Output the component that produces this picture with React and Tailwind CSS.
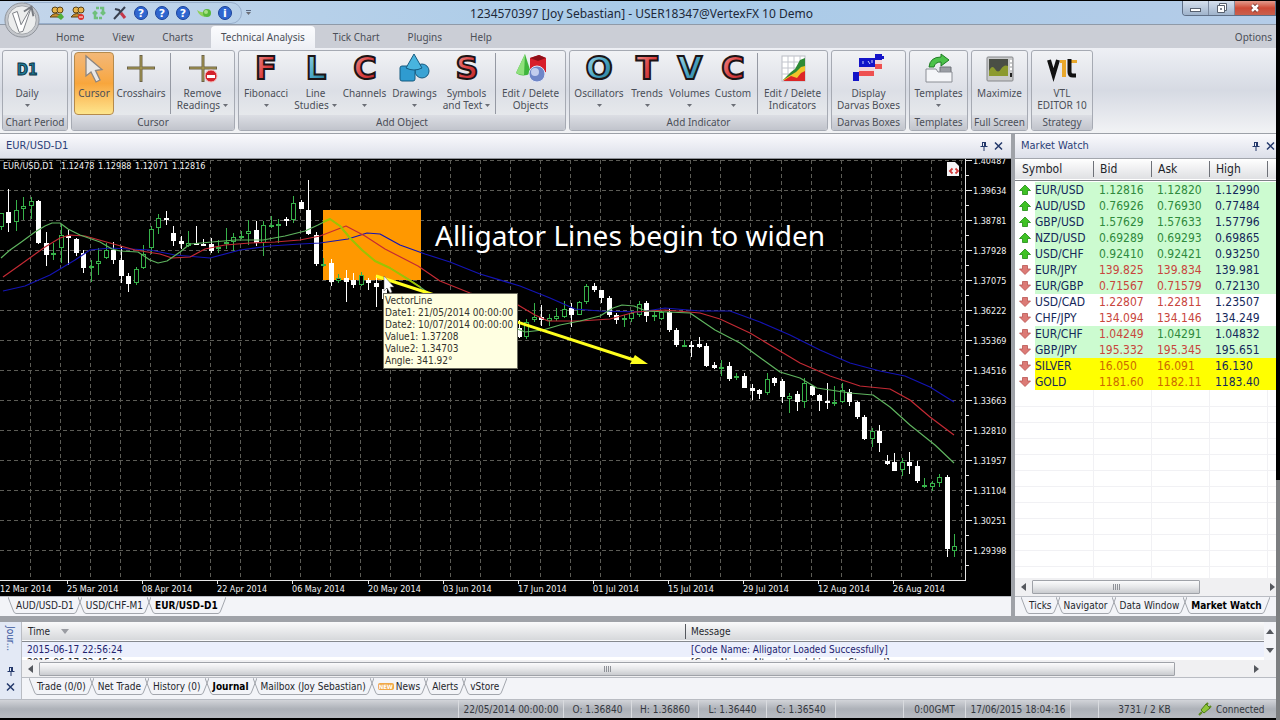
import { useState } from 'react';
import clsx from 'clsx';

// [kind, high, bodyTop, bodyBottom, low]; 'g' is an up bar, 'w' a down bar
const CANDLES = [
  ['g', 213, 213, 227, 230], ['w', 189, 212, 223, 232], ['g', 200, 210, 222, 231], ['g', 197, 206, 209, 220],
  ['g', 197, 201, 206, 219], ['w', 200, 201, 243, 244], ['w', 232, 243, 255, 266], ['g', 243, 253, 255, 260],
  ['g', 224, 235, 248, 263], ['w', 230, 236, 238, 265], ['w', 238, 239, 253, 256], ['w', 250, 253, 268, 273],
  ['g', 260, 266, 268, 282], ['g', 248, 261, 264, 275], ['g', 243, 250, 258, 259], ['w', 242, 250, 260, 264],
  ['w', 246, 260, 276, 283], ['w', 273, 276, 284, 292], ['g', 267, 269, 283, 285], ['g', 245, 254, 268, 269],
  ['g', 226, 229, 248, 254], ['g', 214, 218, 228, 234], ['w', 211, 218, 220, 225], ['w', 226, 233, 241, 246],
  ['w', 236, 241, 244, 249], ['g', 231, 243, 246, 247], ['w', 226, 243, 245, 245], ['w', 239, 244, 246, 246],
  ['w', 238, 244, 251, 253], ['g', 240, 247, 249, 253], ['g', 228, 242, 243, 249], ['g', 233, 237, 242, 251],
  ['g', 231, 236, 238, 239], ['g', 220, 231, 234, 245], ['w', 221, 230, 243, 246], ['g', 221, 225, 243, 256],
  ['g', 216, 225, 227, 228], ['g', 219, 224, 225, 243], ['w', 217, 219, 221, 226], ['g', 196, 203, 220, 223],
  ['w', 200, 202, 209, 209], ['w', 180, 210, 234, 235], ['w', 232, 235, 264, 266], ['g', 258, 264, 266, 267],
  ['w', 259, 263, 282, 286], ['g', 274, 278, 281, 283], ['w', 270, 278, 282, 302], ['w', 273, 280, 285, 288],
  ['g', 272, 275, 285, 286], ['w', 278, 280, 283, 290], ['w', 275, 283, 287, 307], ['w', 287, 289, 299, 306],
  null, null, null, null, null, null, null, null, null, null, null, null, null, null, null, null, null,
  ['w', 320, 328, 337, 338], ['g', 319, 322, 337, 339], ['g', 303, 317, 320, 322], ['w', 305, 317, 320, 326],
  ['g', 314, 318, 321, 326], ['g', 308, 316, 319, 321], ['g', 301, 309, 317, 318], ['w', 303, 308, 315, 327],
  ['g', 301, 302, 315, 315], ['g', 284, 286, 302, 304], ['w', 283, 286, 290, 292], ['w', 290, 290, 298, 303],
  ['w', 296, 298, 315, 317], ['w', 313, 315, 320, 324], ['g', 315, 318, 320, 327], ['g', 310, 313, 319, 322],
  ['g', 301, 304, 315, 317], ['w', 301, 303, 316, 322], ['g', 311, 315, 317, 321], ['g', 311, 312, 319, 320],
  ['w', 308, 312, 330, 332], ['w', 328, 330, 345, 347], ['g', 340, 345, 346, 347], ['w', 341, 345, 347, 357],
  ['w', 337, 344, 347, 348], ['w', 343, 346, 366, 367], ['w', 362, 365, 368, 369], ['g', 360, 367, 368, 376],
  ['w', 362, 366, 379, 381], ['g', 373, 376, 378, 380], ['w', 373, 376, 388, 388], ['w', 384, 388, 391, 400],
  ['w', 389, 390, 394, 399], ['g', 373, 379, 393, 395], ['w', 377, 378, 383, 386], ['w', 379, 381, 397, 403],
  ['g', 393, 396, 399, 413], ['w', 391, 394, 402, 411], ['g', 378, 383, 402, 408], ['w', 385, 386, 395, 396],
  ['w', 394, 395, 401, 411], ['w', 383, 401, 403, 409], ['g', 386, 402, 403, 406], ['g', 383, 390, 402, 403],
  ['w', 389, 392, 402, 406], ['w', 401, 402, 417, 419], ['w', 415, 417, 439, 440], ['g', 428, 431, 439, 447],
  ['w', 425, 431, 443, 452], ['w', 455, 461, 464, 465], ['w', 453, 462, 471, 471], ['g', 458, 462, 470, 476],
  ['w', 452, 462, 466, 474], ['w', 461, 466, 481, 483], ['g', 478, 485, 486, 488], ['g', 481, 483, 487, 491],
  ['g', 474, 477, 483, 487], ['w', 475, 477, 549, 557], ['g', 534, 546, 551, 557],
];

const LIPS = '1,258 10,250 20,243 35,232 45,226 52,223 60,223 68,229 80,235 100,242 112,249 120,251 138,252 150,260 158,263 167,261 180,252 190,244 212,242 235,240 263,240 285,236 305,231 318,225 330,219 340,226 350,238 362,250 375,261 390,268 410,280 430,294 460,306 500,322 525,332 543,330 560,325 580,321 600,316 613,308 622,305 634,306 646,311 690,313 715,330 740,343 780,372 800,378 817,388 850,393 873,395 890,407 910,425 935,445 954,463';
const TEETH = '3,277 20,265 45,247 60,238 70,235 85,236 110,243 135,250 160,254 172,258 190,257 205,249 225,245 250,243 275,242 300,240 320,236 346,226 365,236 385,249 418,266 440,281 470,293 518,305 535,315 548,321 580,321 610,319 635,312 665,310 700,313 720,319 750,333 780,351 800,363 830,376 860,386 890,389 910,400 930,417 954,435';
const JAW = '3,291 25,286 50,275 75,260 90,250 110,248 150,250 175,255 210,258 240,250 270,246 300,244 320,243 348,239 367,233 380,234 400,245 425,254 450,262 480,274 520,286 550,298 575,309 600,311 640,312 665,308 700,311 730,311 760,322 790,335 820,350 850,363 880,371 905,376 930,387 954,402';

const PRICES = ['1.40487', '1.39634', '1.38781', '1.37928', '1.37075', '1.36222', '1.35369', '1.34516', '1.33663', '1.32810', '1.31957', '1.31104', '1.30251', '1.29398'];
const DATES = ['12 Mar 2014', '25 Mar 2014', '08 Apr 2014', '22 Apr 2014', '06 May 2014', '20 May 2014', '03 Jun 2014', '17 Jun 2014', '01 Jul 2014', '15 Jul 2014', '29 Jul 2014', '12 Aug 2014', '26 Aug 2014'];
const LAST_BAR = [['EUR/USD,D1', 3], ['1.12478', 61], ['1.12988', 98], ['1.12071', 135], ['1.12816', 172]];

const QUOTES = [
  ['up', 'EUR/USD', '1.12816', '1.12820', '1.12990', 'gg', 'green'],
  ['up', 'AUD/USD', '0.76926', '0.76930', '0.77484', 'gg', 'green'],
  ['up', 'GBP/USD', '1.57629', '1.57633', '1.57796', 'gg', 'green'],
  ['up', 'NZD/USD', '0.69289', '0.69293', '0.69865', 'gg', 'green'],
  ['up', 'USD/CHF', '0.92410', '0.92421', '0.93250', 'gg', 'green'],
  ['down', 'EUR/JPY', '139.825', '139.834', '139.981', 'rr', 'green'],
  ['down', 'EUR/GBP', '0.71567', '0.71579', '0.72130', 'rr', 'green'],
  ['down', 'USD/CAD', '1.22807', '1.22811', '1.23507', 'rr', 'white'],
  ['down', 'CHF/JPY', '134.094', '134.146', '134.249', 'rr', 'white'],
  ['down', 'EUR/CHF', '1.04249', '1.04291', '1.04832', 'rg', 'green'],
  ['down', 'GBP/JPY', '195.332', '195.345', '195.651', 'rr', 'green'],
  ['down', 'SILVER', '16.050', '16.091', '16.130', 'oo', 'yellow'],
  ['down', 'GOLD', '1181.60', '1182.11', '1183.40', 'oo', 'yellow'],
];

const ROW_BG = { green: 'bg-[#ccfbd0]', white: 'bg-white', yellow: 'bg-[#ffff00]' };
const PRICE_COLOR = { g: 'text-[#2f8a3c]', r: 'text-[#c8463c]', o: 'text-[#cc6a00]' };

function LetterIcon({ letter, tone }) {
  return (
    <svg viewBox="0 0 32 32" className="h-8 w-8 overflow-visible">
      <defs>
        <linearGradient id={`fill-${tone}`} x1="0" y1="0" x2="1" y2="1">
          <stop offset="0" stopColor={tone === 'red' ? '#f4a09a' : '#b9e4f0'} />
          <stop offset="0.5" stopColor={tone === 'red' ? '#dc4444' : '#4aa6c4'} />
          <stop offset="1" stopColor={tone === 'red' ? '#b01e24' : '#1c6c8c'} />
        </linearGradient>
      </defs>
      <text x="16" y="26" textAnchor="middle" fontFamily="DejaVu Sans, sans-serif" fontWeight="700" fontSize="32"
        fill={`url(#fill-${tone})`} stroke="#1c1416" strokeWidth="2">{letter}</text>
    </svg>
  );
}

function PeriodIcon() {
  return (
    <svg viewBox="0 0 32 32" className="h-8 w-8">
      <text x="16" y="22" textAnchor="middle" fontFamily="DejaVu Sans Condensed, DejaVu Sans, sans-serif" fontWeight="700" fontSize="15" fill="#1f7f9c" stroke="#0c3242" strokeWidth="1">D1</text>
    </svg>
  );
}

function CursorIcon() {
  return (
    <svg viewBox="0 0 32 32" className="h-8 w-8">
      <path d="M8 3 L8 23 L13 19 L18 29 L22 27 L17.500 17.500 L24 16.500 Z" fill="#e9e7e6" stroke="#8c8580" strokeWidth="1.300" />
    </svg>
  );
}

function CrossIcon({ remove }) {
  return (
    <svg viewBox="0 0 32 32" className="h-8 w-8">
      <path d="M16 2 V29 M2 15 H30" stroke="#6b6248" strokeWidth="3" />
      <path d="M16 3 V28 M3 15 H29" stroke="#b3a24e" strokeWidth="1" />
      {remove && (
        <>
          <circle cx="24" cy="23" r="6" fill="#d4222c" stroke="#f2b4b0" />
          <rect x="20" y="22" width="8" height="3" fill="#fff" />
        </>
      )}
    </svg>
  );
}

function DrawingsIcon() {
  return (
    <svg viewBox="0 0 32 32" className="h-8 w-8" stroke="#155a80">
      <circle cx="23" cy="18" r="7" fill="#3aa3d4" />
      <rect x="1" y="13" width="15" height="15" rx="2" fill="#2f9bd0" />
      <path d="M15 1 L23 15 Q15 19 7 15 Z" fill="#48b4de" />
    </svg>
  );
}

function ObjectsIcon() {
  return (
    <svg viewBox="0 0 32 32" className="h-8 w-8">
      <path d="M15 5 L24 2 L31 5 V19 L22 21 L15 17 Z" fill="#d81e2a" />
      <path d="M15 5 L24 2 L31 5 L23 8 Z" fill="#8e0f18" />
      <path d="M10 1 L16 20 Q8 25 1 20 Z" fill="#3fb53c" />
      <path d="M10 1 L9 22 Q4 22 1 20 Z" fill="#8fe07c" />
      <circle cx="22" cy="21" r="8" fill="#6f86c8" stroke="#dfe5f6" />
      <circle cx="20" cy="19" r="4" fill="#c2cdee" />
    </svg>
  );
}

function IndicatorsIcon() {
  return (
    <svg viewBox="0 0 32 32" className="h-8 w-8">
      <rect x="5" y="3" width="23" height="25" fill="#fff" stroke="#b9bcc4" />
      <path d="M11 3 V28 M17 3 V28 M23 3 V28 M5 9 H28 M5 15 H28 M5 21 H28" stroke="#c3c6ce" />
      <path d="M6 27 L14 19 L18 16 L23 7 L28 5 V28 Z" fill="#2e8b35" />
      <path d="M6 27 L14 22 L19 19 L24 14 L28 13 V28 Z" fill="#f0c52a" />
      <path d="M6 28 L14 23 L20 25 L24 20 L28 18 V28 Z" fill="#dc2626" />
    </svg>
  );
}

function DarvasIcon() {
  return (
    <svg viewBox="0 0 32 32" className="h-8 w-8">
      <path d="M22 1 H29 V3 H31 V6 H29 V7 H22 Z M6 5 H22 V14 H6 Z M0 19 H6 V28 H0 Z" fill="#1414c8" />
      <path d="M22 7 H29 V16 H22 Z M6 14 H21 V23 H6 Z" fill="#f4d8dc" />
      <path d="M22 11 H29 V16 H22 Z M6 18 H21 V23 H6 Z" fill="#ee5050" />
      <path d="M10 8 V11 M15 8 L17 11 M19 7 V10" stroke="#cdd2ff" />
    </svg>
  );
}

function TemplatesIcon() {
  return (
    <svg viewBox="0 0 32 32" className="h-8 w-8">
      <path d="M17 14 H28 V20 H17 Z" fill="#9a9da4" stroke="#6f7278" />
      <path d="M3 16 H13 L15 19 H29 V29 H3 Z" fill="#f4f5f8" stroke="#8a8d94" />
      <path d="M6 14 Q7 4 18 4 V1 L26 7 L18 13 V9 Q12 9 11 14 Z" fill="#4cc24a" stroke="#1d7a22" />
    </svg>
  );
}

function MaximizeIcon() {
  return (
    <svg viewBox="0 0 32 32" className="h-8 w-8">
      <rect x="3" y="4" width="26" height="24" rx="1" fill="#c9cacb" stroke="#85878a" />
      <rect x="5" y="6" width="19" height="17" fill="#4a4e45" />
      <path d="M5 18 Q8 11 11 16 T17 16 T24 13 V23 H5 Z" fill="#8c9a2e" />
      <path d="M27 7 V9 M27 11 V13 M27 15 V17" stroke="#fff" strokeWidth="2" />
      <path d="M27 20 V24" stroke="#222" strokeWidth="2" />
    </svg>
  );
}

function VtlIcon() {
  return (
    <svg viewBox="0 0 32 32" className="h-8 w-8" fill="none">
      <path d="M3 7 L7.500 22 L12 7" stroke="#111" strokeWidth="4" />
      <path d="M18 7 V24" stroke="#e8a82c" strokeWidth="4" />
      <path d="M14 8.500 H20 M25 8.500 H31" stroke="#e8a82c" strokeWidth="3" />
      <path d="M23.500 6 V19 Q23.500 22.500 27 22.500 H30" stroke="#111" strokeWidth="4" />
    </svg>
  );
}

const RIBBON = [
  { title: 'Chart Period', width: 'w-[66px]', items: [{ icon: <PeriodIcon />, lines: ['Daily'], menu: true, width: 'w-[44px]' }] },
  {
    title: 'Cursor', width: 'w-[164px]', items: [
      { icon: <CursorIcon />, lines: ['Cursor'], active: true, width: 'w-[40px]' },
      { icon: <CrossIcon />, lines: ['Crosshairs'], width: 'w-[54px]' },
      { sep: true },
      { icon: <CrossIcon remove />, lines: ['Remove', 'Readings'], menu: true, width: 'w-[59px]' },
    ],
  },
  {
    title: 'Add Object', width: 'w-[328px]', items: [
      { icon: <LetterIcon letter="F" tone="red" />, lines: ['Fibonacci'], menu: true, width: 'w-[50px]' },
      { icon: <LetterIcon letter="L" tone="blue" />, lines: ['Line', 'Studies'], menu: true, width: 'w-[49px]' },
      { icon: <LetterIcon letter="C" tone="red" />, lines: ['Channels'], menu: true, width: 'w-[49px]' },
      { icon: <DrawingsIcon />, lines: ['Drawings'], menu: true, width: 'w-[51px]' },
      { icon: <LetterIcon letter="S" tone="red" />, lines: ['Symbols', 'and Text'], menu: true, width: 'w-[53px]' },
      { sep: true },
      { icon: <ObjectsIcon />, lines: ['Edit / Delete', 'Objects'], width: 'w-[65px]' },
    ],
  },
  {
    title: 'Add Indicator', width: 'w-[259px]', items: [
      { icon: <LetterIcon letter="O" tone="blue" />, lines: ['Oscillators'], menu: true, width: 'w-[54px]' },
      { icon: <LetterIcon letter="T" tone="red" />, lines: ['Trends'], menu: true, width: 'w-[42px]' },
      { icon: <LetterIcon letter="V" tone="blue" />, lines: ['Volumes'], menu: true, width: 'w-[43px]' },
      { icon: <LetterIcon letter="C" tone="red" />, lines: ['Custom'], menu: true, width: 'w-[44px]' },
      { sep: true },
      { icon: <IndicatorsIcon />, lines: ['Edit / Delete', 'Indicators'], width: 'w-[65px]' },
    ],
  },
  { title: 'Darvas Boxes', width: 'w-[75px]', items: [{ icon: <DarvasIcon />, lines: ['Display', 'Darvas Boxes'], width: 'w-[69px]' }] },
  { title: 'Templates', width: 'w-[59px]', items: [{ icon: <TemplatesIcon />, lines: ['Templates'], menu: true, width: 'w-[53px]' }] },
  { title: 'Full Screen', width: 'w-[57px]', items: [{ icon: <MaximizeIcon />, lines: ['Maximize'], width: 'w-[51px]' }] },
  { title: 'Strategy', width: 'w-[62px]', items: [{ icon: <VtlIcon />, lines: ['VTL', 'EDITOR 10'], width: 'w-[56px]' }] },
];

function Caret() {
  return (
    <svg viewBox="0 0 5 3" className="inline-block h-[3px] w-[5px]">
      <path d="M0 0 H5 L2.500 3 Z" fill="#6b6e76" />
    </svg>
  );
}

function RibbonButton({ item }) {
  const [first, second] = item.lines;
  return (
    <button
      className={clsx(
        'flex shrink-0 flex-col items-center rounded-sm border text-[10px] leading-3 whitespace-nowrap',
        item.width,
        item.active
          ? 'border-[#b58a4c] bg-linear-to-b from-[#f3b877] via-[#f8a63c] to-[#fde58c]'
          : 'border-transparent',
      )}
    >
      {item.icon}
      <span className="mt-[2px]">{first}</span>
      <span className="flex h-3 items-center gap-[3px]">
        {second}
        {item.menu && <Caret />}
      </span>
    </button>
  );
}

function Ribbon() {
  return (
    <div className="flex h-[86px] gap-[3px] border-b border-[#9da1a8] bg-linear-to-b from-[#eef0f5] via-[#d6dae3] to-[#f2f3f5] px-[2px] pt-[2px] pb-[2px] text-[#4b4f58]">
      {RIBBON.map((group) => (
        <section key={group.title} className={clsx('flex shrink-0 flex-col overflow-hidden rounded-[3px] border border-[#a6aab3] bg-linear-to-b from-[#f1f2f5] via-[#dcdfe6] to-[#eceeef]', group.width)}>
          <div className="flex flex-1 px-[2px] pt-px">
            {group.items.map((item, i) => (
              item.sep
                ? <span key={i} className="mx-[2px] my-px w-px bg-[#9599a3]" />
                : <RibbonButton key={i} item={item} />
            ))}
          </div>
          <h2 className="h-[15px] bg-linear-to-b from-[#dcdee4] to-[#c1c4cc] text-center text-[10px] leading-[15px] whitespace-nowrap">{group.title}</h2>
        </section>
      ))}
    </div>
  );
}

function UsersIcon({ minus }) {
  return (
    <svg viewBox="0 0 16 16" className="h-4 w-4">
      <circle cx="6" cy="5" r="3" fill="#e8b54a" stroke="#5a4317" />
      <circle cx="11" cy="5" r="3" fill="#e8b54a" stroke="#5a4317" />
      <path d="M1 12 Q6 5 14 12 Z" fill="#c98d2c" stroke="#5a4317" />
      {minus ? <circle cx="11" cy="12" r="3" fill="#e0302c" /> : <path d="M8 12 L12 8 L15 12 L12 15 Z" fill="#4eae3a" />}
      {minus && <path d="M9 12 H13" stroke="#fff" />}
    </svg>
  );
}

function RoundIcon({ mark }) {
  return (
    <svg viewBox="0 0 16 16" className="h-4 w-4">
      <circle cx="8" cy="8" r="6.500" fill="#2f66cf" stroke="#1b429a" />
      <text x="8" y="12" textAnchor="middle" fontFamily="DejaVu Sans, sans-serif" fontWeight="700" fontSize="11" fill="#fff">{mark}</text>
    </svg>
  );
}

function QuickAccess() {
  return (
    <div className="flex h-[22px] items-center gap-[5px] rounded-r-full border border-[#97aecb] pr-2 pl-6">
      <button aria-label="Add account"><UsersIcon /></button>
      <button aria-label="Remove account"><UsersIcon minus /></button>
      <button aria-label="Refresh">
        <svg viewBox="0 0 16 16" className="h-4 w-4" fill="none" stroke="#6fc07c" strokeWidth="2.500">
          <path d="M7 13 H4 V8 M2 9 L4 7 L6 9 M9 3 H12 V8 M14 7 L12 9 L10 7 M5 3 H8 M8 13 H11" />
        </svg>
      </button>
      <button aria-label="Tools">
        <svg viewBox="0 0 16 16" className="h-4 w-4" fill="none" strokeWidth="2">
          <path d="M2 14 L13 2" stroke="#38404f" />
          <path d="M3 4 L7 5 L9 8" stroke="#38404f" />
          <path d="M9 8 L13 13" stroke="#c4384a" strokeWidth="3" />
        </svg>
      </button>
      <button aria-label="Help"><RoundIcon mark="?" /></button>
      <button aria-label="Guide"><RoundIcon mark="?" /></button>
      <button aria-label="Support"><RoundIcon mark="?" /></button>
      <button aria-label="Chat">
        <svg viewBox="0 0 16 16" className="h-4 w-4">
          <path d="M1 5 Q5 8 9 7 V12 Q3 11 1 5 Z" fill="#8fd05c" />
          <circle cx="11" cy="8" r="4" fill="#58b83c" />
          <circle cx="10" cy="7" r="2" fill="#a8e084" />
        </svg>
      </button>
      <button aria-label="About"><RoundIcon mark="i" /></button>
    </div>
  );
}

function TitleBar() {
  return (
    <header className="relative flex h-[23px] items-center bg-linear-to-r from-[#c3d5ea] via-[#a9cbe8] to-[#b4cce8] pl-6">
      <QuickAccess />
      <button aria-label="Customize quick access" className="ml-1 flex flex-col items-center">
        <span className="mb-px h-px w-[5px] bg-[#5b6b85]" />
        <Caret />
      </button>
      <h1 className="flex-1 pt-[3px] pr-[150px] text-center font-['Noto_Sans','Open_Sans',sans-serif] text-xs whitespace-nowrap text-[#202838]">1234570397 [Joy Sebastian] - USER18347@VertexFX 10 Demo</h1>
      <div className="flex h-[15px] w-[94px] self-start overflow-hidden rounded-bl border border-t-0 border-[#5f6f86]">
        <button aria-label="Minimize" className="flex w-[26px] items-center justify-center border-r border-[#7c8aa0] bg-linear-to-b from-[#d5e0ee] to-[#9fb3cb]">
          <span className="mt-1 h-1 w-[11px] border border-[#56606f] bg-white" />
        </button>
        <button aria-label="Restore" className="flex w-[26px] items-center justify-center border-r border-[#7c8aa0] bg-linear-to-b from-[#d5e0ee] to-[#9fb3cb]">
          <svg viewBox="0 0 12 12" className="h-3 w-3" fill="#fff" stroke="#56606f">
            <path d="M3.500 1.500 H10.500 V8.500 H3.500 Z" />
            <path d="M1.500 3.500 H8.500 V10.500 H1.500 Z" />
            <path d="M4.500 6.500 H5.500 V7.500 H4.500 Z" />
          </svg>
        </button>
        <button aria-label="Close" className="flex flex-1 items-center justify-center bg-linear-to-b from-[#e39a8c] via-[#cf4a36] to-[#c8604e]">
          <svg viewBox="0 0 12 12" className="h-3 w-3" fill="none">
            <path d="M3 3 L9 9 M9 3 L3 9" stroke="#6d2a24" strokeWidth="4" />
            <path d="M3 3 L9 9 M9 3 L3 9" stroke="#fff" strokeWidth="2.500" />
          </svg>
        </button>
      </div>
      <button aria-label="Application menu" className="absolute top-px left-1">
        <svg viewBox="0 0 38 38" className="h-9 w-9">
          <circle cx="19" cy="19" r="18" fill="#c3c6cb" stroke="#8c9097" />
          <circle cx="19" cy="19" r="15" fill="#eceded" stroke="#9ea1a6" />
          <path d="M9 12 L14 10 L18 24 L29 5 L20 31 L16 32 Z" fill="#fff" stroke="#777a80" />
          <path d="M21 10 L29 5 L31 15" fill="none" stroke="#777a80" strokeWidth="2" />
        </svg>
      </button>
    </header>
  );
}

function MenuTabs() {
  const [active, setActive] = useState('Technical Analysis');
  return (
    <nav className="flex h-6 items-end border-t border-[#8f9aa8] bg-[#cbced6] pl-[42px] text-[10px] text-[#4b4f58]">
      {['Home', 'View', 'Charts', 'Technical Analysis', 'Tick Chart', 'Plugins', 'Help'].map((tab) => (
        <button
          key={tab}
          onClick={() => setActive(tab)}
          className={clsx('mx-1 h-[22px] rounded-t px-[10px] whitespace-nowrap', tab === active && 'bg-linear-to-b from-[#fbfcfe] to-[#eef0f5]')}
        >
          {tab}
        </button>
      ))}
      <button className="ml-auto h-[22px] pr-1">Options</button>
    </nav>
  );
}

function PinIcon() {
  return (
    <svg viewBox="0 0 10 10" className="h-[10px] w-[10px]" fill="none" stroke="#24396b">
      <path d="M3 1.500 H7 M3.500 1.500 V5.500 M6.500 1.500 V5.500 M5.500 1.500 V5.500 M1.500 5.500 H8.500 M5 6 V10" />
    </svg>
  );
}

function CloseIcon() {
  return (
    <svg viewBox="0 0 10 10" className="h-[10px] w-[10px]" fill="none" stroke="#24396b" strokeWidth="1.500">
      <path d="M1 1.500 L8 8.500 M8 1.500 L1 8.500" />
    </svg>
  );
}

function PanelTitle({ children, tight }) {
  return (
    <div className="flex h-6 items-center gap-[5px] bg-linear-to-b from-[#fafafd] to-[#dcdfe9] pl-[6px] text-[11px] text-[#2c3f78]">
      <h2>{children}</h2>
      <button aria-label={`Pin ${children}`} className="ml-auto"><PinIcon /></button>
      <button aria-label={`Close ${children}`} className={tight ? 'mr-0' : 'mr-[7px]'}><CloseIcon /></button>
    </div>
  );
}

function candleX(i) {
  return Math.round(0.5 + i * 7.51);
}

function Candle({ index, data }) {
  const [kind, high, top, bottom, low] = data;
  const x = candleX(index);
  if (kind === 'w') {
    return (
      <g fill="#fff">
        <rect x={x} y={high} width="1" height={low - high} />
        <rect x={x - 2} y={top} width="5" height={bottom - top} />
      </g>
    );
  }
  return (
    <g stroke="#37b24a">
      <path d={`M${x + 0.5} ${high} V${top} M${x + 0.5} ${bottom} V${low}`} />
      <rect x={x - 1.5} y={top + 0.5} width="4" height={Math.max(bottom - top - 1, 1)} fill="#000" />
    </g>
  );
}

function PriceChart() {
  return (
    <div className="relative border-t border-[#8d9096] bg-black">
      <svg viewBox="0 159 1011 437" className="block h-auto w-full" fontFamily="DejaVu Sans Condensed, Tahoma, sans-serif" fontSize="9">
        <g stroke="#5c5c56" strokeDasharray="4 3" shapeRendering="crispEdges">
          {PRICES.map((p, i) => <path key={p} d={`M0 ${160.5 + i * 30} H965`} />)}
          {Array.from({ length: 32 }, (_, i) => <path key={i} d={`M${Math.round(30 + i * 30.02) + 0.5} 160 V579`} />)}
        </g>
        <rect x="323" y="210" width="98" height="70" fill="#ff9800" />
        {CANDLES.map((c, i) => c && <Candle key={i} index={i} data={c} />)}
        <g fill="none" strokeLinejoin="round">
          <polyline points={JAW} stroke="#1414b4" strokeWidth="1.200" />
          <polyline points={TEETH} stroke="#c42a34" strokeWidth="1.200" />
          <polyline points={LIPS} stroke="#5fb45f" strokeWidth="1.200" />
          <path d="M323 222 L330 219 L340 226 L350 238 L362 250 L375 261 L390 268 L420 287" stroke="#9cc400" strokeWidth="2" />
        </g>
        <path d="M376 276 L634 360" stroke="#ffff1e" strokeWidth="3" />
        <path d="M648 364 L630 364 L635 355 Z" fill="#ffff1e" />

        <g stroke="#e6e6e6" fill="none">
          <path d="M965.500 159 V580.500 M0 580.500 H966" />
          {PRICES.map((p, i) => <path key={p} d={`M966 ${160.5 + i * 30} H972 M966 ${175.5 + i * 30} H969`} />)}
          {DATES.map((d, i) => <path key={d} d={`M${Math.round(i * 75.1 - 8) + 0.5} 581 V584`} />)}
        </g>
        <g fill="#f2f2f2" stroke="none">
          {PRICES.map((p, i) => <text key={p} x="973" y={164 + i * 30}>{p}</text>)}
          {DATES.map((d, i) => <text key={d} x={i === 0 ? 0 : Math.round(i * 75.1 - 8)} y="592">{d}</text>)}
          {LAST_BAR.map(([label, x]) => <text key={label} x={x} y="169">{label}</text>)}
        </g>
        <path d="M947 162 H955 L959 166 V176 H947 Z" fill="#f4f4f6" />
        <path d="M952.500 168.500 L950 171 L952.500 173.500 M955.500 168.500 L958 171 L955.500 173.500" fill="none" stroke="#d23a3a" strokeWidth="1.800" />
        <text x="435" y="246" fill="#fff" fontFamily="Noto Sans, Open Sans, sans-serif" fontSize="28">Alligator Lines begin to widen</text>
        <path d="M384 276 V291 L387 288 L390 293 L392 292 L390 287 H394 Z" fill="#fff" stroke="#555" strokeWidth="0.500" />
      </svg>
      <div role="tooltip" className="absolute top-[134px] left-[383px] border border-[#6c6c60] bg-[#ffffe1] py-px pr-1 pl-px text-[10px] leading-3 whitespace-nowrap text-[#33332c]">
        <p>VectorLine</p>
        <p>Date1: 21/05/2014 00:00:00</p>
        <p>Date2: 10/07/2014 00:00:00</p>
        <p>Value1: 1.37208</p>
        <p>Value2: 1.34703</p>
        <p>Angle: 341.92°</p>
      </div>
    </div>
  );
}

// Dock tabs hang from the panel above them, so the sides slope inwards to the bottom
function DockTabs({ tabs, initial, className }) {
  const [active, setActive] = useState(initial);
  return (
    <div className={clsx('flex h-5 shrink-0 items-start border-t border-[#b9bcc3] bg-[#f3f4f8] text-[10px] text-[#24262c]', className)}>
      {tabs.map((tab) => (
        <button key={tab} onClick={() => setActive(tab)} className={clsx('-mr-1 flex h-[17px] shrink-0 whitespace-nowrap', tab === active && 'font-bold text-black')}>
          <svg viewBox="0 0 8 17" className="h-[17px] w-2" fill="none" stroke="#a3a6ad">
            <path d="M0 0 L5 13 Q6 16.500 8 16.500" />
          </svg>
          <span className="flex h-full items-center border-b border-[#a3a6ad]">
            {tab === 'News' && <span className="mr-[2px] rounded-[2px] bg-[#f0a848] px-px text-[6px] leading-[7px] font-bold text-white">NEW</span>}
            {tab}
          </span>
          <svg viewBox="0 0 8 17" className="h-[17px] w-2" fill="none" stroke="#a3a6ad">
            <path d="M8 0 L3 13 Q2 16.500 0 16.500" />
          </svg>
        </button>
      ))}
    </div>
  );
}

function Arrow({ dir }) {
  const paths = { left: 'M6 0 V8 L1 4 Z', right: 'M2 0 V8 L7 4 Z', up: 'M0 6 H8 L4 1 Z', down: 'M0 2 H8 L4 7 Z' };
  return (
    <svg viewBox="0 0 8 8" className="h-2 w-2 shrink-0">
      <path d={paths[dir]} fill="currentColor" />
    </svg>
  );
}

function ScrollBar({ thumb, className }) {
  return (
    <div className={clsx('flex shrink-0 items-center gap-1 bg-[#f0f0f2] text-[#55585e]', className)}>
      <button aria-label="Scroll left"><Arrow dir="left" /></button>
      <div className="h-[14px] flex-1">
        <div className={clsx('flex h-full items-center justify-center gap-px rounded-[1px] border border-[#9fa2a8] bg-linear-to-b from-[#fbfbfc] via-[#e6e7e9] to-[#c9cbcf]', thumb)}>
          {[0, 1, 2, 3].map((n) => <span key={n} className="h-[6px] w-px bg-[#8e9197]" />)}
        </div>
      </div>
      <button aria-label="Scroll right"><Arrow dir="right" /></button>
    </div>
  );
}

function TrendArrow({ dir }) {
  return (
    <svg viewBox="0 0 12 12" className="h-3 w-3" strokeWidth="0.800">
      {dir === 'up'
        ? <path d="M6 1 L11.500 6.500 H8.500 V10.500 H3.500 V6.500 H0.500 Z" fill="#3fc224" stroke="#1f8a12" />
        : <path d="M6 10.500 L11.500 5 H8.500 V1.500 H3.500 V5 H0.500 Z" fill="#dc7a76" stroke="#b95450" />}
    </svg>
  );
}

function MarketWatch() {
  return (
    <section className="flex w-[261px] shrink-0 flex-col bg-white">
      <PanelTitle tight>Market Watch</PanelTitle>
      <div className="h-0 grow overflow-hidden border-t border-[#a3a6ad]">
        <table className="w-full table-fixed border-collapse text-left text-xs whitespace-nowrap">
          <colgroup>
            <col className="w-5" />
            <col className="w-[58px]" />
            <col className="w-[58px]" />
            <col className="w-[58px]" />
            <col className="w-[58px]" />
            <col />
          </colgroup>
          <thead>
            <tr className="h-[21px] border-b border-[#7d8086] bg-linear-to-b from-white to-[#dfe0e3] text-[#22242a]">
              <th colSpan={2} className="pl-[7px] font-normal">Symbol</th>
              <th className="font-normal"><span className="block border-l border-[#6e7178] pl-[6px]">Bid</span></th>
              <th className="font-normal"><span className="block border-l border-[#6e7178] pl-[6px]">Ask</span></th>
              <th className="font-normal"><span className="block border-l border-[#6e7178] pl-[6px]">High</span></th>
              <th><span className="block h-4 border-l border-[#6e7178]" /></th>
            </tr>
          </thead>
          <tbody>
            <tr className="h-[2px]"><td colSpan={6} /></tr>
            {QUOTES.map(([dir, symbol, bid, ask, high, colors, bg]) => (
              <tr key={symbol} className="h-4 leading-4 text-[#14285a]">
                <td className="pl-1"><TrendArrow dir={dir} /></td>
                <td className={ROW_BG[bg]}>{symbol}</td>
                <td className={clsx('pl-[6px]', ROW_BG[bg], PRICE_COLOR[colors[0]])}>{bid}</td>
                <td className={clsx('pl-[6px]', ROW_BG[bg], PRICE_COLOR[colors[1]])}>{ask}</td>
                <td className={clsx('pl-[6px]', ROW_BG[bg])}>{high}</td>
                <td className={ROW_BG[bg]} />
              </tr>
            ))}
            {Array.from({ length: 12 }, (_, i) => (
              <tr key={i} className="h-4 border-b border-[#f1f1f4]">
                <td />
                <td />
                <td className="border-l border-[#f1f1f4]" />
                <td className="border-l border-[#f1f1f4]" />
                <td className="border-l border-[#f1f1f4]" />
                <td className="border-l border-[#f1f1f4]" />
              </tr>
            ))}
          </tbody>
        </table>
      </div>
      <ScrollBar thumb="w-[168px]" className="h-[18px] pl-[5px]" />
      <DockTabs tabs={['Ticks', 'Navigator', 'Data Window', 'Market Watch']} initial="Market Watch" className="pl-[6px]" />
    </section>
  );
}

function Journal() {
  return (
    <section className="flex h-[77px] bg-[#f3f4f8]">
      <div className="flex w-[21px] flex-col items-center bg-[#e3e9f5] pt-1 pb-[7px] text-[10px] text-[#3a58a0]">
        <h2 className="[writing-mode:vertical-rl]">Jour...</h2>
        <button aria-label="Pin Journal" className="mt-auto mb-[6px] block"><PinIcon /></button>
        <button aria-label="Close Journal" className="block"><CloseIcon /></button>
      </div>
      <div className="flex flex-1 flex-col border-l border-[#b9bcc3]">
        <div className="flex h-[38px]">
          <div className="flex-1 overflow-hidden">
            <table className="w-full table-fixed border-collapse text-left text-[10px]">
              <thead>
                <tr className="h-[19px] border-b border-[#85888e] bg-linear-to-b from-[#fafafb] to-[#d6d8db] text-[#26282e]">
                  <th className="w-[663px] pl-[6px] font-normal">Time <span className="ml-2 inline-block text-[#9a9ca2]"><Arrow dir="down" /></span></th>
                  <th className="font-normal"><span className="block border-l border-[#55585e] pl-[5px]">Message</span></th>
                </tr>
              </thead>
              <tbody className="text-[#22226e]">
                <tr className="h-4 bg-[#ebeffc]">
                  <td className="pl-[5px]">2015-06-17 22:56:24</td>
                  <td className="pl-[6px]">[Code Name: Alligator Loaded Successfully]</td>
                </tr>
                <tr className="h-4 bg-white align-top leading-3 text-[#26282e]">
                  <td className="pl-[5px]">2015-06-17 22:45:19</td>
                  <td className="pl-[6px]">[Code Name: Alternative Ichimoku Stopped]</td>
                </tr>
              </tbody>
            </table>
          </div>
          <div className="flex w-3 flex-col items-center justify-between py-[6px] text-[#55585e]">
            <button aria-label="Scroll up" className="block"><Arrow dir="up" /></button>
            <button aria-label="Scroll down" className="block"><Arrow dir="down" /></button>
          </div>
        </div>
        <ScrollBar thumb="w-[94%]" className="h-[17px] pr-4 pl-[5px]" />
        <DockTabs
          tabs={['Trade (0/0)', 'Net Trade', 'History (0)', 'Journal', 'Mailbox (Joy Sebastian)', 'News', 'Alerts', 'vStore']}
          initial="Journal"
          className="pl-[7px]"
        />
      </div>
    </section>
  );
}

function StatusBar() {
  const cell = 'flex shrink-0 items-center justify-center border-l border-[#d9dbdf] whitespace-nowrap';
  return (
    <footer className="flex h-[19px] justify-end border-t border-[#b9bcc3] bg-linear-to-b from-[#d2d4d9] via-[#adb1b8] to-[#b9bcc2] text-[10px] text-[#34373e]">
      <span className={clsx(cell, 'w-[105px]')}>22/05/2014 00:00:00</span>
      <span className={clsx(cell, 'w-[68px]')}>O: 1.36840</span>
      <span className={clsx(cell, 'w-[67px]')}>H: 1.36860</span>
      <span className={clsx(cell, 'w-[68px]')}>L: 1.36440</span>
      <span className={clsx(cell, 'w-[69px]')}>C: 1.36540</span>
      <span className={clsx(cell, 'w-[68px]')} />
      <span className={clsx(cell, 'w-[62px]')}>0:00GMT</span>
      <span className={clsx(cell, 'w-[105px]')}>17/06/2015 18:04:16</span>
      <span className={clsx(cell, 'w-7')} />
      <span className={clsx(cell, 'w-[92px]')}>3731 / 2 KB</span>
      <span className="flex w-[86px] items-center gap-1 pl-2 whitespace-nowrap">
        <svg viewBox="0 0 14 14" className="h-[14px] w-[14px]">
          <path d="M1 13 L4 10 M8 3 L10 1 M11 6 L13 4" stroke="#5d8a1e" strokeWidth="2" />
          <path d="M3 8 L8 2 L12 6 L6 11 Z" fill="#8fc63a" stroke="#4f7d18" />
        </svg>
        Connected
      </span>
    </footer>
  );
}

export default function App() {
  return (
    <div className="flex min-h-screen bg-black font-['DejaVu_Sans_Condensed','DejaVu_Sans',sans-serif]">
      <div className="flex min-w-0 flex-1 flex-col pt-px">
        <TitleBar />
        <div className="font-['Noto_Sans','Open_Sans',sans-serif]">
          <MenuTabs />
          <Ribbon />
        </div>
        <main className="flex">
          <section className="flex min-w-0 flex-1 flex-col bg-[#f3f4f8]">
            <PanelTitle>EUR/USD-D1</PanelTitle>
            <PriceChart />
            <DockTabs tabs={['AUD/USD-D1', 'USD/CHF-M1', 'EUR/USD-D1']} initial="EUR/USD-D1" className="pl-2" />
          </section>
          <div className="w-1 shrink-0 bg-[#9fa2a8]" />
          <MarketWatch />
        </main>
        <div className="h-[6px] shrink-0 bg-[#9fa2a8]" />
        <Journal />
        <StatusBar />
      </div>
      <div className="flex w-1 shrink-0 flex-col">
        <div className="flex-2 bg-black" />
        <div className="flex-1 bg-[#7c7e80]" />
      </div>
    </div>
  );
}
